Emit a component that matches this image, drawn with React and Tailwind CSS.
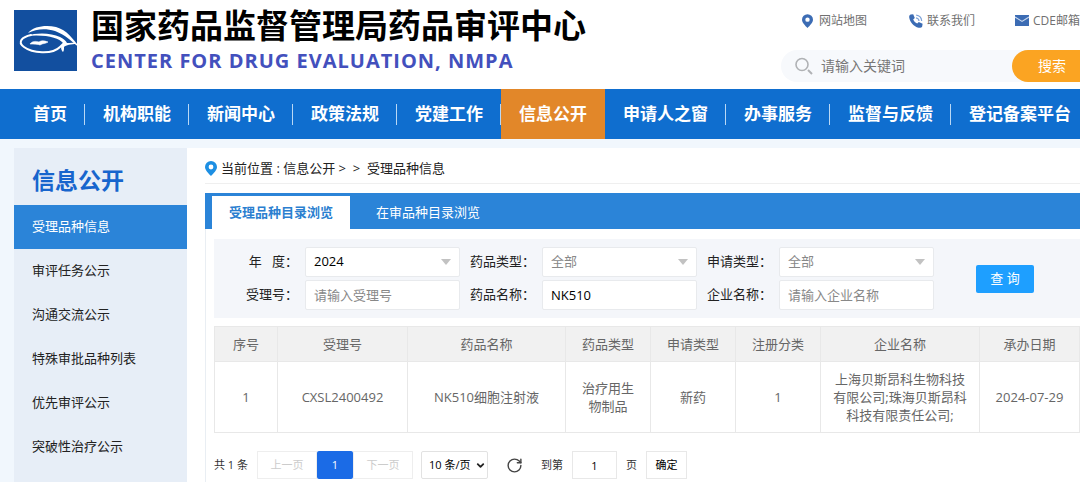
import { ChevronDown, RotateCw } from 'lucide-react'

const navItems = [
  '首页',
  '机构职能',
  '新闻中心',
  '政策法规',
  '党建工作',
  '信息公开',
  '申请人之窗',
  '办事服务',
  '监督与反馈',
  '登记备案平台',
]

const sideItems = [
  '受理品种信息',
  '审评任务公示',
  '沟通交流公示',
  '特殊审批品种列表',
  '优先审评公示',
  '突破性治疗公示',
]

const columns = [
  { label: '序号', width: 'w-[63px]' },
  { label: '受理号', width: 'w-[130px]' },
  { label: '药品名称', width: 'w-[158px]' },
  { label: '药品类型', width: 'w-[85px]' },
  { label: '申请类型', width: 'w-[85px]' },
  { label: '注册分类', width: 'w-[85px]' },
  { label: '企业名称', width: 'w-[159px]' },
  { label: '承办日期', width: '' },
]

const rows = [
  [
    '1',
    'CXSL2400492',
    'NK510细胞注射液',
    '治疗用生物制品',
    '新药',
    '1',
    '上海贝斯昂科生物科技有限公司;珠海贝斯昂科科技有限责任公司;',
    '2024-07-29',
  ],
]

function Logo() {
  return (
    <svg viewBox="0 0 66 62" className="h-[62px] w-[66px] shrink-0" aria-hidden="true">
      <rect width="63" height="61" fill="#124f9f" />
      <path
        d="M14 23 C20 16 32 15 42 17 C53 20 59 29 66 38 C58 32 52 25 41 21 C31 18 22 19 14 23 Z"
        fill="#fff"
      />
      <path
        d="M17 25 C8 27 3 32 10 37 C18 43 38 45 46 37 C48 35 49 34 51 33"
        fill="none"
        stroke="#fff"
        strokeWidth="2"
        strokeLinecap="round"
      />
      <path
        d="M12 26 C24 22 37 23 46 27 C50 29 52 31 53 33 C57 33 60 32 63 34 C57 34 52 35 50 37 C50 39 50 41 49 42 C47 40 46 37 49 33 C45 28 32 24 12 26 Z"
        fill="#fff"
      />
      <path
        d="M16 34 C18 31 22 31 25 32 C28 30 31 31 34 32 C31 34 29 33 26 35 C24 34 20 34 16 34 Z"
        fill="#fff"
        stroke="#fff"
        strokeWidth="0.6"
      />
    </svg>
  )
}

function PinIcon({ className }) {
  return (
    <svg viewBox="0 0 12 15" className={className} aria-hidden="true">
      <path
        d="M6 0 A6 6 0 0 0 0 6 C0 9 3.5 12.5 6 15 C8.5 12.5 12 9 12 6 A6 6 0 0 0 6 0 Z M6 3.6 A2.4 2.4 0 1 1 6 8.4 A2.4 2.4 0 0 1 6 3.6 Z"
        fill="currentColor"
        fillRule="evenodd"
      />
    </svg>
  )
}

function PhoneIcon() {
  return (
    <svg viewBox="0 0 14 14" className="h-[14px] w-[14px] text-[#3c6cb4]" aria-hidden="true">
      <path
        d="M1.6 .6 L4.2 .2 L5.8 4 L4.2 5.6 C5 7.4 6.4 8.8 8.2 9.6 L9.8 8.1 L13.6 9.8 L13.2 12.4 C12.4 13.7 11 14 9.6 13.7 C4.8 12.4 1 8.4 .2 3.4 C0 2.2 .6 1 1.6 .6 Z"
        fill="currentColor"
      />
      <path d="M7 3.8 Q9.8 4.2 10 7 M7.2 1.2 Q12.3 1.8 12.7 7" fill="none" stroke="#7fa3d8" strokeWidth="1.2" />
    </svg>
  )
}

function MailIcon() {
  return (
    <svg viewBox="0 0 14 11" className="h-[11px] w-[14px]" aria-hidden="true">
      <rect width="14" height="11" fill="#3c6cb4" />
      <path d="M0 2 L7 6.4 L14 2" fill="none" stroke="#c9d9ef" strokeWidth="1.2" />
    </svg>
  )
}

function Header() {
  return (
    <header className="flex h-[89px] justify-between bg-white pl-[14px]">
      <div className="flex pt-[10px]">
        <Logo />
        <div className="pl-[11px]">
          <h1 className="-mt-1 text-[33px] leading-[40px] font-bold whitespace-nowrap text-black">
            国家药品监督管理局药品审评中心
          </h1>
          <p className="text-xl leading-[30px] font-bold tracking-wider whitespace-nowrap text-[#4350bd]">
            CENTER FOR DRUG EVALUATION, NMPA
          </p>
        </div>
      </div>

      <div className="w-[299px] shrink-0">
        <div className="flex h-[41px] items-center pl-[21px] text-xs whitespace-nowrap text-[#707070]">
          <a href="#map" className="flex w-[107px] shrink-0 items-center gap-[6px]">
            <PinIcon className="h-[14px] w-[11px] text-[#3c6cb4]" />
            网站地图
          </a>
          <a href="#contact" className="flex w-[106px] shrink-0 items-center gap-1">
            <PhoneIcon />
            联系我们
          </a>
          <a href="#mail" className="flex shrink-0 items-center gap-1">
            <MailIcon />
            CDE邮箱
          </a>
        </div>
        <form className="mt-[9px] flex h-[32px] rounded-l-full bg-[#f7f9fc]">
          <label htmlFor="keyword" className="flex items-center pl-[14px]" aria-label="请输入关键词">
            <svg viewBox="0 0 18 18" className="h-[18px] w-[18px] text-[#b0b2b5]" aria-hidden="true">
              <circle cx="7" cy="7.5" r="6" fill="none" stroke="currentColor" strokeWidth="1.6" />
              <path d="M13 13 L17 17" stroke="currentColor" strokeWidth="2" />
            </svg>
          </label>
          <input
            id="keyword"
            type="text"
            placeholder="请输入关键词"
            className="w-0 flex-1 bg-transparent pl-2 text-sm text-[#666] outline-none placeholder:text-[#777]"
          />
          <button type="button" className="w-[68px] rounded-l-full bg-[#fba422] pl-3 text-sm text-white">
            搜索
          </button>
        </form>
      </div>
    </header>
  )
}

function NavBar() {
  return (
    <nav className="flex h-[50px] items-center overflow-hidden bg-[#0f6ecf] pl-[15px] text-[17px] font-bold whitespace-nowrap text-white">
      {navItems.map((item, index) => {
        const isActive = item === '信息公开'

        return (
          <a
            key={item}
            href={`#nav-${index}`}
            className={`flex shrink-0 items-center ${isActive ? 'h-full bg-[#e28729]' : 'h-[21px]'}`}
          >
            <span className="px-[18px]">{item}</span>
            {!isActive && index < navItems.length - 1 && <span className="-ml-px h-[21px] w-px bg-[#b9d8f5]" />}
          </a>
        )
      })}
    </nav>
  )
}

function Sidebar() {
  return (
    <aside className="w-[173px] shrink-0 bg-[#e7eef7]">
      <h2 className="flex h-[57px] items-center pt-2 pl-[18px] text-[23px] font-bold text-[#1765cd]">信息公开</h2>
      <ul className="text-[13px]">
        {sideItems.map((item, index) => (
          <li key={item}>
            <a
              href={`#side-${index}`}
              className={`flex h-11 items-center pl-[18px] ${index === 0 ? 'bg-[#2b84d8] text-white' : 'text-[#222]'}`}
            >
              {item}
            </a>
          </li>
        ))}
      </ul>
    </aside>
  )
}

function SelectField({ id, label, value, muted }) {
  return (
    <div className="flex items-center">
      <label htmlFor={id} className="w-[82px] shrink-0 pr-[7px] text-right whitespace-pre text-[#222]">
        {label}
      </label>
      <div className="relative flex-1">
        <select
          id={id}
          className={`h-[30px] w-full appearance-none rounded-xs border border-[#e8eaed] bg-white px-2 outline-none ${
            muted ? 'text-[#888]' : 'text-black'
          }`}
        >
          <option>{value}</option>
        </select>
        <svg
          viewBox="0 0 10 6"
          className="pointer-events-none absolute top-3 right-[9px] h-[6px] w-[10px] text-[#c2c2c2]"
          aria-hidden="true"
        >
          <path d="M0 0 H10 L5 6 Z" fill="currentColor" />
        </svg>
      </div>
    </div>
  )
}

function TextField({ id, label, value, placeholder }) {
  return (
    <div className="flex items-center">
      <label htmlFor={id} className="w-[82px] shrink-0 pr-[7px] text-right whitespace-pre text-[#222]">
        {label}
      </label>
      <input
        id={id}
        type="text"
        defaultValue={value}
        placeholder={placeholder}
        className="h-[30px] w-0 flex-1 rounded-xs border border-[#e8eaed] bg-white px-2 text-black outline-none placeholder:text-[#888]"
      />
    </div>
  )
}

function SearchPanel() {
  return (
    <form className="flex items-center bg-[#f4f6fa] py-2 pl-[9px]">
      <div className="grid max-w-[711px] flex-1 grid-cols-3 gap-y-[3px]">
        <SelectField id="year" label="年   度：" value="2024" />
        <SelectField id="drugType" label="药品类型：" value="全部" muted />
        <SelectField id="applyType" label="申请类型：" value="全部" muted />
        <TextField id="acceptNo" label="受理号：" placeholder="请输入受理号" />
        <TextField id="drugName" label="药品名称：" value="NK510" />
        <TextField id="company" label="企业名称：" placeholder="请输入企业名称" />
      </div>
      <button type="button" className="ml-[42px] h-7 w-[58px] rounded-xs bg-[#1e9fff] text-[13px] text-white">
        查 询
      </button>
    </form>
  )
}

function ResultTable() {
  return (
    <table className="mt-2 w-full table-fixed border-collapse text-center text-[13px] leading-[18px] text-[#666]">
      <thead>
        <tr className="h-[35px] bg-[#f1f1f1]">
          {columns.map((column) => (
            <th key={column.label} className={`border border-[#e8e8e8] font-normal ${column.width}`}>
              {column.label}
            </th>
          ))}
        </tr>
      </thead>
      <tbody>
        {rows.map((row) => (
          <tr key={row[1]} className="h-[71px]">
            {row.map((cell, index) => (
              <td key={columns[index].label} className="border border-[#e8e8e8] px-3">
                {cell}
              </td>
            ))}
          </tr>
        ))}
      </tbody>
    </table>
  )
}

function Pager() {
  return (
    <div className="mt-[18px] flex items-center text-[11px] whitespace-nowrap text-[#333]">
      <span className="w-[43px]">共 1 条</span>
      <button type="button" className="h-7 w-[60px] border border-[#eee] text-[#ccc]">
        上一页
      </button>
      <button type="button" className="h-7 w-9 rounded-xs bg-[#1b6be6] text-white">
        1
      </button>
      <button type="button" className="h-7 w-[60px] border border-[#eee] text-[#ccc]">
        下一页
      </button>
      <div className="relative ml-2">
        <select
          aria-label="每页条数"
          className="h-7 w-[67px] appearance-none rounded-xs border border-[#e2e2e2] bg-white pl-[7px] text-black outline-none"
        >
          <option>10 条/页</option>
        </select>
        <ChevronDown
          size={11}
          strokeWidth={4}
          className="pointer-events-none absolute top-[9px] right-[2px] text-[#222]"
        />
      </div>
      <button type="button" aria-label="刷新" className="ml-[18px] text-[#444]">
        <RotateCw size={17} strokeWidth={2} />
      </button>
      <label htmlFor="page" className="ml-[18px]">
        到第
      </label>
      <input
        id="page"
        type="text"
        defaultValue="1"
        className="mr-[9px] ml-[9px] h-7 w-[45px] border border-[#e8e8e8] text-center text-black outline-none"
      />
      <span>页</span>
      <button type="button" className="ml-[9px] h-7 w-[41px] border border-[#e8e8e8] text-black">
        确定
      </button>
    </div>
  )
}

function App() {
  return (
    <div className="flex min-h-screen flex-col overflow-hidden bg-[#f1f7fd] font-['Open_Sans','Noto_Sans_CJK_SC',sans-serif]">
      <Header />
      <NavBar />
      <div className="mt-[9px] flex flex-1 pl-[14px]">
        <Sidebar />
        <main className="min-w-0 flex-1 bg-white pl-[18px] text-[13px]">
          <div className="flex h-9 items-center gap-1 border-b border-[#efefef] pt-[6px] text-[#222]">
            <PinIcon className="h-[15px] w-[12px] text-[#1d8fe3]" />
            <span>当前位置 : 信息公开 &gt; &nbsp;&gt; &nbsp;受理品种信息</span>
          </div>

          <div className="mt-[9px] flex h-9 bg-[#2b84d8] pt-[3px] pl-[7px]">
            <button type="button" className="w-[138px] bg-white pt-px font-bold text-[#2b7fd0]">
              受理品种目录浏览
            </button>
            <button type="button" className="w-[156px] pt-px text-white">
              在审品种目录浏览
            </button>
          </div>

          <section className="border-l border-[#e9eef3] pt-[10px] pb-[3px] pl-[8px]">
            <SearchPanel />
            <ResultTable />
            <Pager />
          </section>
        </main>
      </div>
    </div>
  )
}

export default App
